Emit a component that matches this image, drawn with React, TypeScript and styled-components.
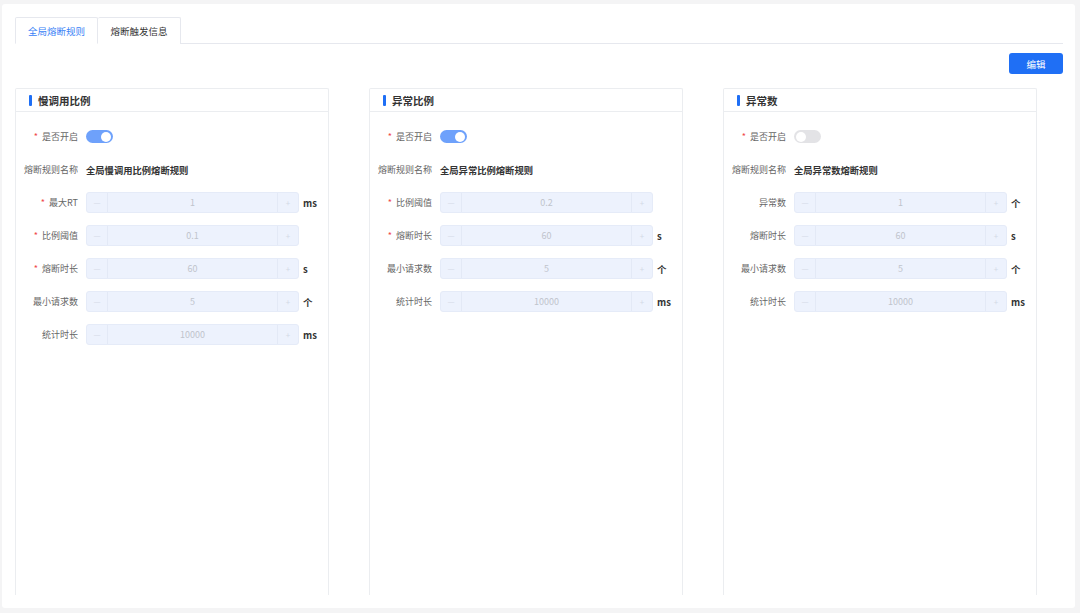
import { FunctionComponent } from "react";
import styled, { createGlobalStyle } from "styled-components";

const GlobalStyle = createGlobalStyle`
  html, body {
    margin: 0;
    padding: 0;
    background: #f4f4f5;
    font-family: "Noto Sans CJK SC", "Noto Sans", sans-serif;
  }
  * { box-sizing: border-box; }
`;

interface Field {
  label: string;
  value: string;
  unit?: string;
  required?: boolean;
}

interface RuleCard {
  title: string;
  enabled: boolean;
  name: string;
  fields: Field[];
}

const cards: RuleCard[] = [
  {
    title: "慢调用比例",
    enabled: true,
    name: "全局慢调用比例熔断规则",
    fields: [
      { label: "最大RT", value: "1", unit: "ms", required: true },
      { label: "比例阈值", value: "0.1", required: true },
      { label: "熔断时长", value: "60", unit: "s", required: true },
      { label: "最小请求数", value: "5", unit: "个" },
      { label: "统计时长", value: "10000", unit: "ms" },
    ],
  },
  {
    title: "异常比例",
    enabled: true,
    name: "全局异常比例熔断规则",
    fields: [
      { label: "比例阈值", value: "0.2", required: true },
      { label: "熔断时长", value: "60", unit: "s", required: true },
      { label: "最小请求数", value: "5", unit: "个" },
      { label: "统计时长", value: "10000", unit: "ms" },
    ],
  },
  {
    title: "异常数",
    enabled: false,
    name: "全局异常数熔断规则",
    fields: [
      { label: "异常数", value: "1", unit: "个" },
      { label: "熔断时长", value: "60", unit: "s" },
      { label: "最小请求数", value: "5", unit: "个" },
      { label: "统计时长", value: "10000", unit: "ms" },
    ],
  },
];

const App: FunctionComponent = () => {
  return (
    <>
      <GlobalStyle />
      <Page>
        <Panel>
          <Tabs>
            <Tab $active>全局熔断规则</Tab>
            <Tab>熔断触发信息</Tab>
          </Tabs>
          <Toolbar>
            <EditButton>编辑</EditButton>
          </Toolbar>
          <Cards>
            {cards.map((card) => (
              <Card key={card.title}>
                <CardHeader>
                  <Bar />
                  <CardTitle>{card.title}</CardTitle>
                </CardHeader>
                <CardBody>
                  <Row>
                    <Label $required>是否开启</Label>
                    <Switch $on={card.enabled}>
                      <Knob $on={card.enabled} />
                    </Switch>
                  </Row>
                  <Row>
                    <Label>熔断规则名称</Label>
                    <NameValue>{card.name}</NameValue>
                  </Row>
                  {card.fields.map((f) => (
                    <Row key={f.label}>
                      <Label $required={f.required}>{f.label}</Label>
                      <Stepper>
                        <StepBtn $side="left">—</StepBtn>
                        <StepValue>{f.value}</StepValue>
                        <StepBtn $side="right">+</StepBtn>
                      </Stepper>
                      {f.unit && <Unit>{f.unit}</Unit>}
                    </Row>
                  ))}
                </CardBody>
              </Card>
            ))}
          </Cards>
        </Panel>
      </Page>
    </>
  );
};

export default App;

const Page = styled.div`
  width: 1080px;
  height: 613px;
  padding: 4px 5px 5px 2px;
`;

const Panel = styled.div`
  height: 100%;
  background: #fff;
  border-radius: 3px;
  padding: 13px 12px 13px 13px;
  display: flex;
  flex-direction: column;
`;

const Tabs = styled.div`
  display: flex;
  border-bottom: 1px solid #e6e8ee;
  height: 27px;
`;

const Tab = styled.div<{ $active?: boolean }>`
  width: 83px;
  height: 27px;
  display: flex;
  align-items: center;
  justify-content: center;
  font-size: 9.5px;
  color: ${(p) => (p.$active ? "#3a7ff6" : "#333")};
  border: 1px solid #e6e8ee;
  border-bottom: ${(p) => (p.$active ? "1px solid #fff" : "none")};
  border-left-width: ${(p) => (p.$active ? "1px" : "0")};
  border-radius: 2px 2px 0 0;
  background: #fff;
`;

const Toolbar = styled.div`
  display: flex;
  justify-content: flex-end;
  margin-top: 9px;
`;

const EditButton = styled.button`
  width: 54px;
  height: 21px;
  border: none;
  border-radius: 3px;
  background: #1f6ff5;
  color: #fff;
  font-family: inherit;
  font-size: 9.5px;
  padding: 0;
`;

const Cards = styled.div`
  display: flex;
  gap: 40px;
  margin-top: 14px;
  flex: 1;
`;

const Card = styled.div`
  width: 314px;
  border: 1px solid #ebedf0;
  border-bottom: none;
  border-radius: 2px 2px 0 0;
`;

const CardHeader = styled.div`
  height: 23px;
  display: flex;
  align-items: center;
  padding-left: 13px;
  border-bottom: 1px solid #ebedf0;
`;

const Bar = styled.span`
  width: 3px;
  height: 11px;
  background: #1f6ff5;
  border-radius: 1px;
  margin-right: 6px;
`;

const CardTitle = styled.span`
  font-size: 10.5px;
  font-weight: 700;
  color: #333;
`;

const CardBody = styled.div`
  padding-top: 14px;
  display: flex;
  flex-direction: column;
  gap: 12px;
`;

const Row = styled.div`
  display: flex;
  align-items: center;
  height: 21px;
`;

const Label = styled.span<{ $required?: boolean }>`
  width: 62px;
  text-align: right;
  margin-right: 8px;
  font-size: 9px;
  color: #666;
  white-space: nowrap;
  &::before {
    content: ${(p) => (p.$required ? '"*"' : '""')};
    color: #f0484a;
    margin-right: 4px;
  }
`;

const Switch = styled.span<{ $on: boolean }>`
  width: 27px;
  height: 13px;
  border-radius: 7px;
  background: ${(p) => (p.$on ? "#6ea1fb" : "#e3e3e6")};
  position: relative;
`;

const Knob = styled.span<{ $on: boolean }>`
  position: absolute;
  top: 1.5px;
  left: ${(p) => (p.$on ? "15px" : "1.5px")};
  width: 10px;
  height: 10px;
  border-radius: 50%;
  background: #fff;
`;

const NameValue = styled.span`
  font-size: 9.3px;
  font-weight: 700;
  color: #333;
`;

const Stepper = styled.div`
  width: 213px;
  height: 21px;
  display: flex;
  background: #edf2fd;
  border: 1px solid #e5ebf8;
  border-radius: 3px;
`;

const StepBtn = styled.span<{ $side: "left" | "right" }>`
  width: 21px;
  display: flex;
  align-items: center;
  justify-content: center;
  font-size: 8px;
  color: #d3d9e6;
  ${(p) =>
    p.$side === "left"
      ? "border-right: 1px solid #e3e9f6;"
      : "border-left: 1px solid #e3e9f6;"}
`;

const StepValue = styled.span`
  flex: 1;
  display: flex;
  align-items: center;
  justify-content: center;
  font-size: 9px;
  color: #c0c4cc;
`;

const Unit = styled.span`
  margin-left: 4px;
  font-size: 9.5px;
  font-weight: 700;
  color: #333;
`;
